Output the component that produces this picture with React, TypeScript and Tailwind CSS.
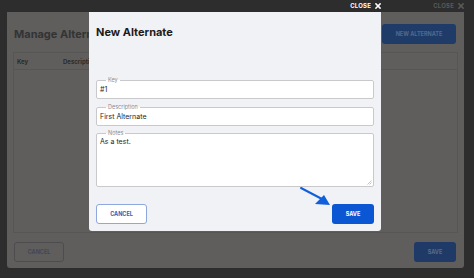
import React from "react";

function XIcon({ color, size = 6 }: { color: string; size?: number }) {
  return (
    <svg width={size} height={size} viewBox="0 0 10 10">
      <path d="M1.5 1.5 L8.5 8.5 M8.5 1.5 L1.5 8.5" stroke={color} strokeWidth="2.6" strokeLinecap="square" />
    </svg>
  );
}

function Field({ label, value, tall }: { label: string; value: string; tall?: boolean }) {
  return (
    <fieldset className="border border-[#c9c9cc] rounded-[2px] bg-white px-[3px]">
      <legend className="ml-[6px] px-[2px] text-[5.5px] leading-[6px] text-[#8d8d90]">{label}</legend>
      {tall ? (
        <div className="relative h-[50px] pt-[1px] text-[7px] leading-[10px] text-[#1f1f1f]">
          {value}
          <svg className="absolute right-[-2px] bottom-[1px]" width="5" height="5" viewBox="0 0 5 5">
            <path d="M4.5 0.5 L0.5 4.5 M4.5 2.5 L2.5 4.5" stroke="#b5b5b5" strokeWidth="0.8" />
          </svg>
        </div>
      ) : (
        <div className="pt-[2px] pb-[3px] text-[7px] leading-[10px] text-[#1f1f1f]">{value}</div>
      )}
    </fieldset>
  );
}

export default function App() {
  return (
    <div
      className="relative w-[474px] h-[278px] overflow-hidden bg-[#2d2d2d]"
      style={{ fontFamily: "Inter, 'Noto Sans', sans-serif" }}
    >
      {/* top bar (dimmed background close) */}
      <div className="h-[12px] flex items-center justify-end pr-[10px] gap-[4px]">
        <span className="text-[6px] font-bold tracking-[0.2px] text-[#5a5a5a] leading-none">CLOSE</span>
        <XIcon color="#5a5a5a" />
      </div>

      {/* dimmed background panel */}
      <div className="ml-[7px] w-[457px] h-[256px] bg-[#5f5e5c] rounded-b-[3px] flex flex-col px-[6px]">
        <div className="mt-[12px] h-[20px] flex items-center justify-between pl-[1px] pr-[2px]">
          <span className="text-[11px] font-bold text-[#333334] leading-none">Manage Alternates</span>
          <div className="w-[74px] h-[20px] rounded-[3px] bg-[#1f3c69] flex items-center justify-center text-[5.5px] font-bold text-[#54698c]">
            NEW ALTERNATE
          </div>
        </div>
        <div className="mt-[8px] h-[181px] border border-[#575654] flex flex-col">
          <div className="h-[17px] border-b border-[#575654] flex items-center text-[6px] font-bold text-[#2c2c2c] pl-[3px]">
            <span className="w-[46px]">Key</span>
            <span>Description</span>
          </div>
        </div>
        <div className="mt-[9px] flex justify-between pl-[1px] pr-[2px]">
          <div className="w-[50px] h-[20px] rounded-[3px] border border-[#4d4d4f] flex items-center justify-center text-[5.5px] font-bold text-[#3e4859]">
            CANCEL
          </div>
          <div className="w-[42px] h-[20px] rounded-[3px] bg-[#1f3a66] flex items-center justify-center text-[5.5px] font-bold text-[#586c8c]">
            SAVE
          </div>
        </div>
      </div>

      {/* modal */}
      <div className="absolute left-[89px] top-[12px] w-[292px] h-[219px] bg-[#f1f2f6] rounded-b-[3px] px-[7px] flex flex-col">
        <div className="absolute bottom-full right-0 h-[12px] flex items-center gap-[4px]">
          <span className="text-[6px] font-bold tracking-[0.2px] text-white leading-none">CLOSE</span>
          <XIcon color="#ffffff" />
        </div>
        <div className="mt-[13px] text-[11px] font-bold leading-[15px] text-[#1b1b1c]">New Alternate</div>
        <div className="mt-[37px] flex flex-col gap-[5px]">
          <Field label="Key" value="#1" />
          <Field label="Description" value="First Alternate" />
        </div>
        <div className="mt-[4px]">
          <Field label="Notes" value="As a test." tall />
        </div>
        <div className="mt-[17px] flex justify-between">
          <div className="w-[51px] h-[20px] rounded-[3px] border border-[#8ea7df] bg-white flex items-center justify-center text-[5.5px] font-bold text-[#2f5db6]">
            CANCEL
          </div>
          <div className="w-[42px] h-[20px] rounded-[3px] bg-[#0b56d2] flex items-center justify-center text-[5.5px] font-bold text-white">
            SAVE
          </div>
        </div>
      </div>

      {/* annotation arrow */}
      <svg className="absolute left-[296px] top-[183px]" width="40" height="28" viewBox="0 0 40 28">
        <path d="M5 5 L26 16" stroke="#1060dc" strokeWidth="2" strokeLinecap="round" />
        <path d="M19 21 L28 12 L34 22 Z" fill="#1060dc" />
      </svg>
    </div>
  );
}
